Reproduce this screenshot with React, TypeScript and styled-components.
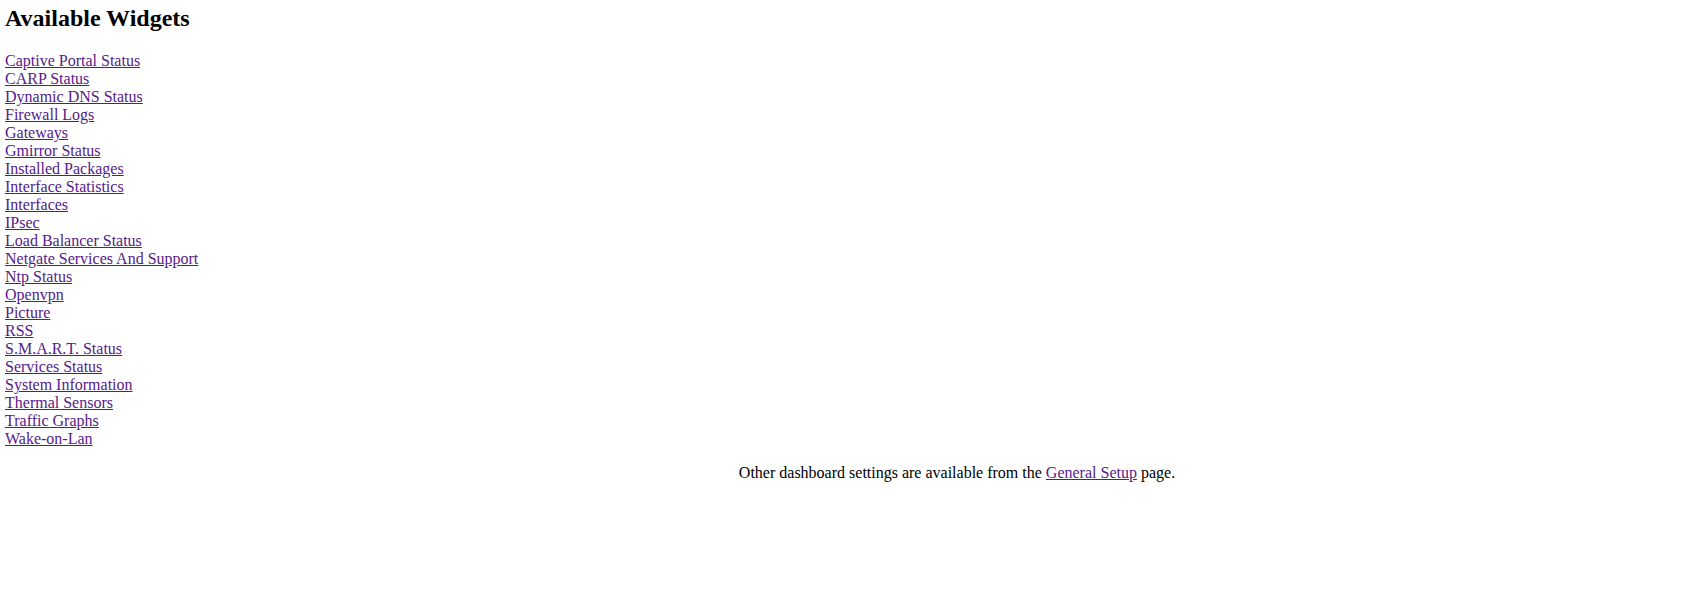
import React from 'react';
import styled, { createGlobalStyle } from 'styled-components';

const GlobalStyle = createGlobalStyle`
  html, body {
    margin: 0;
    padding: 0;
    background: #fff;
  }
  body {
    font-family: "Liberation Serif", "Times New Roman", serif;
    font-size: 16px;
    color: #000;
  }
`;

const widgets = [
  'Captive Portal Status',
  'CARP Status',
  'Dynamic DNS Status',
  'Firewall Logs',
  'Gateways',
  'Gmirror Status',
  'Installed Packages',
  'Interface Statistics',
  'Interfaces',
  'IPsec',
  'Load Balancer Status',
  'Netgate Services And Support',
  'Ntp Status',
  'Openvpn',
  'Picture',
  'RSS',
  'S.M.A.R.T. Status',
  'Services Status',
  'System Information',
  'Thermal Sensors',
  'Traffic Graphs',
  'Wake-on-Lan',
];

const App = () => {
  return (
    <>
      <GlobalStyle />
      <Page>
        <Title>Available Widgets</Title>
        <WidgetList>
          {widgets.map((name) => (
            <WidgetLink key={name} href="#">
              {name}
            </WidgetLink>
          ))}
        </WidgetList>
        <Footer>
          Other dashboard settings are available from the{' '}
          <InlineLink href="#">General Setup</InlineLink> page.
        </Footer>
      </Page>
    </>
  );
};

export default App;

const Page = styled.div`
  padding: 5px;
`;

const Title = styled.h2`
  margin: 0 0 20px;
  font-size: 24px;
  font-weight: bold;
  line-height: 27px;
`;

const WidgetList = styled.div`
  display: flex;
  flex-direction: column;
  align-items: flex-start;
`;

const WidgetLink = styled.a`
  color: #551a8b;
  text-decoration: underline;
  line-height: 18px;
`;

const InlineLink = styled.a`
  color: #551a8b;
  text-decoration: underline;
`;

const Footer = styled.p`
  margin: 16px 0 0;
  padding-left: 217px;
  text-align: center;
  line-height: 18px;
`;
